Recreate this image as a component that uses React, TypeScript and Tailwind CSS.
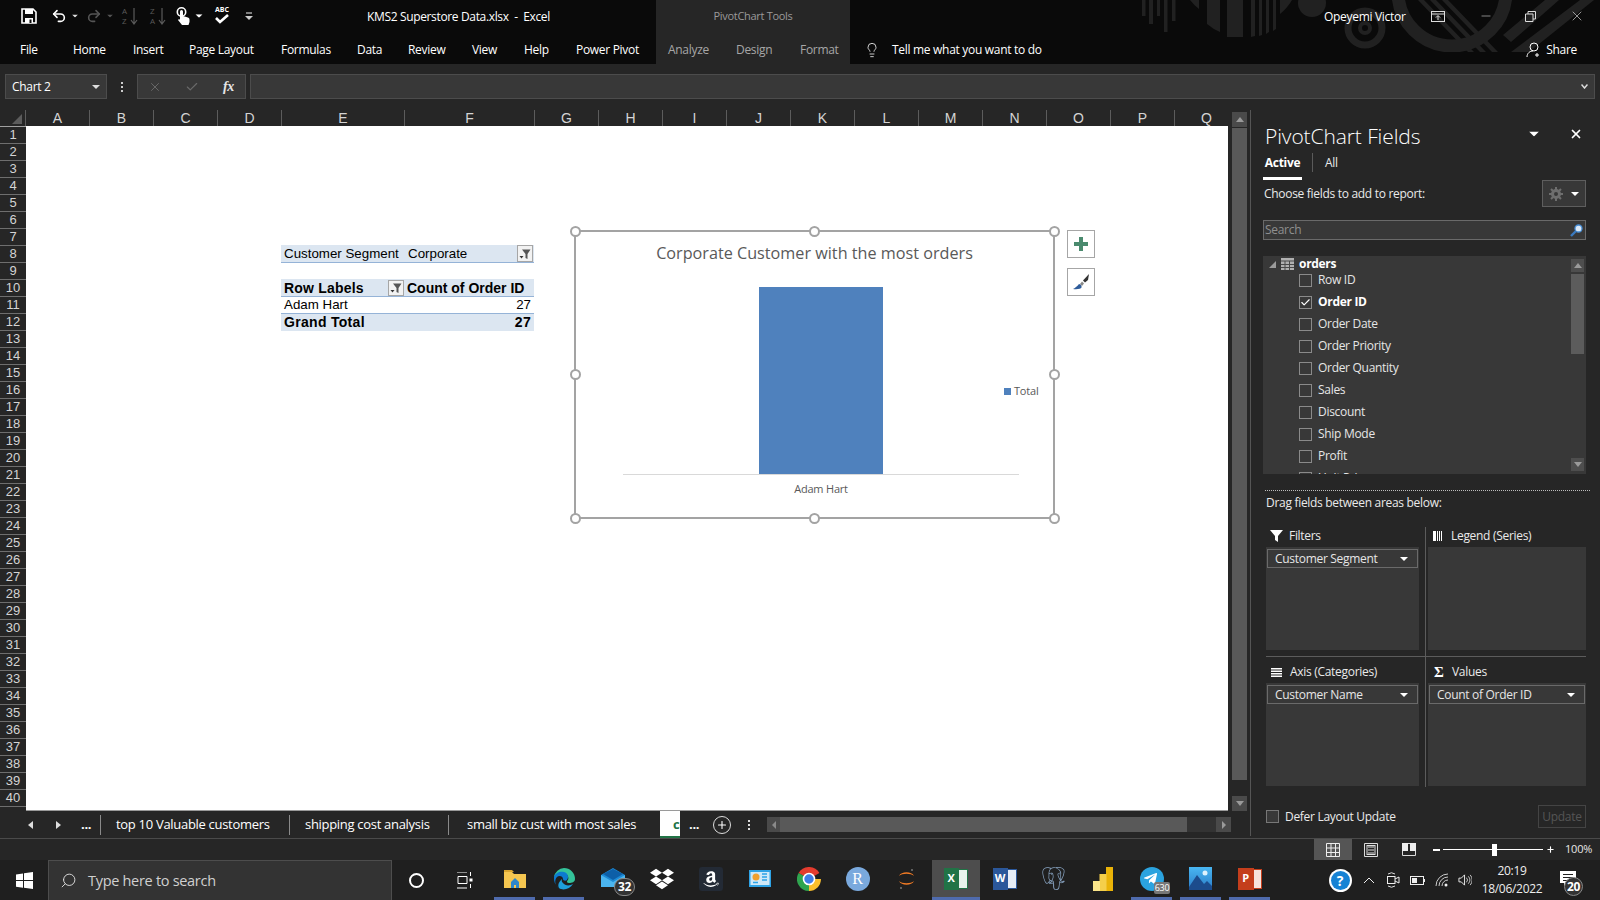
import React from "react";
import { FaDropbox, FaAmazon, FaTelegramPlane } from "react-icons/fa";
import { SiPostgresql } from "react-icons/si";
import { Search, Lightbulb, X, Minus, Plus, Undo2, Redo2, Check } from "lucide-react";

const Caret = ({ className = "" }: { className?: string }) => (
  <svg width="8" height="4" viewBox="0 0 8 4" className={className}><path d="M0 0h8L4 4z" fill="currentColor" /></svg>
);

const Box = ({ checked = false }: { checked?: boolean }) => (
  <span className="w-[13px] h-[13px] border border-[#8a8a8a] flex items-center justify-center shrink-0">
    {checked && <Check size={11} strokeWidth={2.5} className="text-white" />}
  </span>
);

const Field = ({ name, checked = false }: { name: string; checked?: boolean }) => (
  <div className="h-[22px] flex items-center pl-[36px] gap-[6px] shrink-0">
    <Box checked={checked} />
    <span className={checked ? "font-bold text-white" : "text-[#e6e6e6]"}>{name}</span>
  </div>
);

const Chip = ({ label }: { label: string }) => (
  <div className="h-[19px] mt-[2px] mx-[1px] border border-[#6a6a6a] flex items-center justify-between pl-[7px] pr-[9px] text-[#e6e6e6]">
    <span>{label}</span>
    <Caret className="text-white" />
  </div>
);

const Funnel = () => (
  <svg width="12" height="12" viewBox="0 0 12 12"><path d="M3 1.5h8.5L8.5 6v5L6.5 10V6z" fill="#555" /><path d="M0.5 8h4L2.5 10.5z" fill="#333" /></svg>
);

const Handle = ({ className }: { className: string }) => (
  <span className={"absolute w-[11px] h-[11px] rounded-full bg-white border-2 border-[#a3a3a3] " + className} />
);

const ColHead = ({ label, w }: { label: string; w: string }) => (
  <div className={w + " h-full border-r border-[#5c5c5c] flex items-center justify-center shrink-0"}>{label}</div>
);

const Cell = ({ active = false, children }: { active?: boolean; children: React.ReactNode }) => (
  <div className="w-[49px] h-full px-[4px] shrink-0">
    <div className={"relative w-full h-full flex items-center justify-center border-b-[3px] " + (active ? "border-[#4f6bad]" : "border-transparent")}>{children}</div>
  </div>
);

const Deco = () => (
  <svg className="absolute right-0 top-0" width="480" height="52" viewBox="0 0 480 52">
    <g fill="#212121">
      <rect x="22" y="0" width="3.5" height="16" /><rect x="29" y="0" width="4" height="24" /><rect x="37" y="0" width="3" height="16" /><rect x="44" y="0" width="3.5" height="32" /><rect x="52" y="0" width="3.5" height="21" />
      <path d="M70 0h9v9a50 50 0 0 1-9-9zM87 0h13v32a50 50 0 0 1-13-8zM107 0h16v37h-16zM131 0h4v36l-4 1zM139 0h3v35l-3 1zM146 0h3v32l-3 2zM153 0h3v29l-3 2zM160 0h12a50 50 0 0 1-12 14z" />
      <circle cx="192" cy="3" r="14" />
      <path d="M298 0h6l50 52h-6zM310 0h6l50 52h-6zM322 0h6l50 52h-6z" />
      <path d="M425 0h14l-48 42-8-7zM460 0h14l-75 60-8-8z" />
    </g>
    <g fill="none" stroke="#212121">
      <circle cx="245" cy="28" r="17" strokeWidth="7" />
      <circle cx="245" cy="28" r="5" strokeWidth="4" />
      <circle cx="332" cy="-8" r="54" strokeWidth="13" />
    </g>
  </svg>
);

const fields = ["Row ID", "Order ID", "Order Date", "Order Priority", "Order Quantity", "Sales", "Discount", "Ship Mode", "Profit", "Unit Price"];
const rows = Array.from({ length: 40 }, (_, i) => i + 1);

export default function App() {
  return (
    <div className="w-[1600px] h-[900px] flex flex-col overflow-hidden bg-[#262626] text-[12px] tracking-[-0.3px] text-[#e6e6e6] font-['Open_Sans','Liberation_Sans',sans-serif]">
      {/* Title bar + ribbon tabs */}
      <div className="relative h-[64px] bg-[#0a0a0a] shrink-0">
        <Deco />
        <div className="relative h-[32px] flex items-center">
          <div className="w-[21px] shrink-0" />
          <svg width="16" height="16" viewBox="0 0 16 16" className="shrink-0"><path d="M1 1h11l3 3v11H1z" fill="none" stroke="#fff" strokeWidth="1.6" /><rect x="4" y="1" width="8" height="5" fill="#fff" /><rect x="4" y="10" width="8" height="5" fill="#fff" /><rect x="8.5" y="11.5" width="2" height="3.5" fill="#0a0a0a" /></svg>
          <Undo2 size={16} strokeWidth={2.4} className="ml-[14px] text-white shrink-0" />
          <Caret className="ml-[4px] text-[#ddd] scale-75 shrink-0" />
          <Redo2 size={16} strokeWidth={2.4} className="ml-[7px] text-[#555] shrink-0" />
          <Caret className="ml-[4px] text-[#555] scale-75 shrink-0" />
          <div className="ml-[8px] w-[18px] flex items-center text-[#5a5a5a] shrink-0">
            <span className="text-[8px] leading-[10px] w-[8px]">A<br />Z</span>
            <svg width="8" height="17" viewBox="0 0 8 17"><path d="M4 0v15M1 12l3 4 3-4" fill="none" stroke="currentColor" strokeWidth="1.2" /></svg>
          </div>
          <div className="ml-[10px] w-[18px] flex items-center text-[#5a5a5a] shrink-0">
            <span className="text-[8px] leading-[10px] w-[8px]">Z<br />A</span>
            <svg width="8" height="17" viewBox="0 0 8 17"><path d="M4 0v15M1 12l3 4 3-4" fill="none" stroke="currentColor" strokeWidth="1.2" /></svg>
          </div>
          <svg width="15" height="18" viewBox="0 0 15 18" className="ml-[8px] shrink-0"><circle cx="5.5" cy="5" r="4.2" fill="none" stroke="#fff" strokeWidth="1.6" /><path d="M4 4.5a1.5 1.5 0 0 1 3 0V9l5 1.5a2 2 0 0 1 1.5 2V15l-1 3H6l-4-5 1-1 1 .8z" fill="#fff" /></svg>
          <Caret className="ml-[4px] text-white scale-90 shrink-0" />
          <div className="ml-[9px] w-[20px] h-[20px] flex flex-col items-center shrink-0">
            <span className="text-[7px] leading-[8px] font-bold text-white tracking-normal">ABC</span>
            <svg width="16" height="11" viewBox="0 0 16 11"><path d="M2 4l4 4 8-7" fill="none" stroke="#fff" strokeWidth="2.6" /></svg>
          </div>
          <svg width="8" height="9" viewBox="0 0 8 9" className="ml-[13px] shrink-0"><path d="M1 1h6" stroke="#ccc" strokeWidth="1.2" /><path d="M0 4h8L4 8z" fill="#ccc" /></svg>
          <div className="w-[114px] shrink-0" />
          <span className="w-[289px] pt-[1px] shrink-0 text-white whitespace-pre tracking-[-0.35px]">KMS2 Superstore Data.xlsx  -  Excel</span>
          <div className="w-[194px] h-full bg-[#262626] flex items-center justify-center text-[#9a9a9a] text-[11px] pt-[1px] shrink-0">PivotChart Tools</div>
          <div className="flex-1" />
          <span className="text-white w-[107px] pt-[1px] shrink-0">Opeyemi Victor</span>
          <svg width="14" height="11" viewBox="0 0 14 11" className="mr-[34px] shrink-0"><rect x="0.5" y="0.5" width="13" height="10" fill="none" stroke="#ddd" /><path d="M0 3h14M7 9V5M5 6.5L7 4.5l2 2" stroke="#ddd" fill="none" /></svg>
          <Minus size={14} strokeWidth={1} className="mr-[32px] text-[#ddd] shrink-0" />
          <svg width="11" height="11" viewBox="0 0 11 11" className="mr-[33px] shrink-0"><path d="M.5 3h7.500v7.500h-7.500zM3 3V.5h7.500V8H8" fill="none" stroke="#ddd" /></svg>
          <X size={16} strokeWidth={1} className="mr-[15px] text-[#ddd] shrink-0" />
        </div>
        <div className="relative h-[32px] flex items-center text-white">
          <span className="w-[73px] pl-[20px] pt-[3px] shrink-0">File</span>
          <span className="w-[60px] pt-[3px] shrink-0">Home</span>
          <span className="w-[56px] pt-[3px] shrink-0">Insert</span>
          <span className="w-[92px] pt-[3px] shrink-0">Page Layout</span>
          <span className="w-[76px] pt-[3px] shrink-0">Formulas</span>
          <span className="w-[51px] pt-[3px] shrink-0">Data</span>
          <span className="w-[64px] pt-[3px] shrink-0">Review</span>
          <span className="w-[52px] pt-[3px] shrink-0">View</span>
          <span className="w-[52px] pt-[3px] shrink-0">Help</span>
          <span className="w-[80px] pt-[3px] shrink-0 whitespace-nowrap">Power Pivot</span>
          <div className="w-[194px] h-full bg-[#262626] flex items-center text-[#a6a6a6] shrink-0">
            <span className="w-[80px] pl-[12px] pt-[3px] shrink-0">Analyze</span>
            <span className="w-[64px] pt-[3px] shrink-0">Design</span>
            <span className="pt-[3px]">Format</span>
          </div>
          <Lightbulb size={16} strokeWidth={1.2} className="ml-[14px] mt-[3px]" />
          <span className="ml-[12px] pt-[3px] whitespace-nowrap">Tell me what you want to do</span>
          <div className="flex-1" />
          <svg width="16" height="16" viewBox="0 0 16 16" className="shrink-0 mt-[3px]"><circle cx="8" cy="5" r="4" fill="none" stroke="#fff" strokeWidth="1" /><path d="M1 15c0-4 3-6 6-6M11 11v4M9 13h4" fill="none" stroke="#fff" strokeWidth="1" /></svg>
          <span className="ml-[4px] mr-[23px] pt-[3px]">Share</span>
        </div>
      </div>

      {/* Formula bar */}
      <div className="h-[46px] flex pt-[10px] pb-[11px] shrink-0">
        <div className="ml-[5px] w-[102px] bg-[#383838] border border-[#4c4c4c] flex items-center justify-between pl-[6px] pr-[6px] pt-[1px] text-white shrink-0">
          <span>Chart 2</span><Caret className="text-[#ddd]" />
        </div>
        <div className="w-[30px] flex flex-col items-center justify-center gap-[2px] shrink-0">
          <span className="w-[2px] h-[2px] bg-[#ccc]" /><span className="w-[2px] h-[2px] bg-[#ccc]" /><span className="w-[2px] h-[2px] bg-[#ccc]" />
        </div>
        <div className="w-[109px] bg-[#383838] border border-[#4c4c4c] flex items-center pl-[10px] shrink-0">
          <X size={14} strokeWidth={1.6} className="text-[#6a6a6a]" />
          <Check size={14} strokeWidth={2} className="ml-[23px] text-[#6a6a6a]" />
          <span className="ml-[24px] font-['Liberation_Serif',serif] italic font-bold text-[14px] text-[#e6e6e6]">fx</span>
        </div>
        <div className="ml-[4px] mr-[5px] flex-1 bg-[#383838] border border-[#4c4c4c] flex items-center justify-end pr-[6px]">
          <svg width="7" height="5" viewBox="0 0 7 5"><path d="M.5 .5L3.500 4 6.500 .5" fill="none" stroke="#ddd" strokeWidth="1.500" /></svg>
        </div>
      </div>

      {/* Main */}
      <div className="flex h-[728px] shrink-0">
        <div className="w-[1250px] flex flex-col shrink-0">
          <div className="flex h-[701px] shrink-0">
            <div className="w-[1228px] flex flex-col font-['Liberation_Sans',sans-serif] tracking-normal text-[14px] text-[#d4d4d4] shrink-0 overflow-hidden">
              {/* Column headers */}
              <div className="flex h-[16px] shrink-0 border-b border-[#a0a0a0] box-content -mb-[1px]">
                <div className="w-[26px] h-full border-r border-[#5c5c5c] flex items-end justify-end pr-[3px] pb-[2px] shrink-0">
                  <svg width="10" height="10" viewBox="0 0 10 10"><path d="M10 0v10H0z" fill="#5c5c5c" /></svg>
                </div>
                {["A", "B", "C", "D"].map((c) => <ColHead key={c} label={c} w="w-[64px]" />)}
                <ColHead label="E" w="w-[123px]" />
                <ColHead label="F" w="w-[130px]" />
                {["G", "H", "I", "J", "K", "L", "M", "N", "O", "P", "Q"].map((c) => <ColHead key={c} label={c} w="w-[64px]" />)}
              </div>
              <div className="flex flex-1 min-h-0">
                <div className="w-[26px] pt-[1px] flex flex-col shrink-0 overflow-hidden">
                  {rows.map((r) => (
                    <div key={r} className="h-[17px] shrink-0 border-b border-[#6e6e6e] flex items-center justify-center text-[13px]">{r}</div>
                  ))}
                </div>
                <div className="relative flex-1 bg-white border-b border-[#9a9a9a] pl-[255px] pt-[119px] text-black">
                  {/* Pivot table */}
                  <div className="w-[253px] text-[13.33px] text-black">
                    <div className="h-[18px] bg-[#dce6f1] border-b border-[#95b3d7] flex items-center pl-[3px] pr-[1px] whitespace-nowrap">
                      <span className="w-[124px] pt-[1px]">Customer Segment</span><span className="flex-1 pt-[1px]">Corporate</span>
                      <span className="w-[16px] h-[17px] bg-[#f2f2f2] border border-[#a6a6a6] flex items-center justify-center"><Funnel /></span>
                    </div>
                    <div className="h-[16px]" />
                    <div className="h-[18px] bg-[#dce6f1] border-b border-[#95b3d7] flex items-center pl-[3px] font-bold text-[14px] whitespace-nowrap">
                      <span className="w-[104px] pt-[1px] tracking-[0.2px]">Row Labels</span>
                      <span className="w-[16px] h-[16px] bg-[#f2f2f2] border border-[#a6a6a6] flex items-center justify-center font-normal"><Funnel /></span>
                      <span className="ml-[3px] pt-[1px]">Count of Order ID</span>
                    </div>
                    <div className="h-[16px] flex items-center justify-between pl-[3px] pr-[3px]"><span>Adam Hart</span><span>27</span></div>
                    <div className="h-[18px] bg-[#dce6f1] border-t border-[#95b3d7] flex items-center justify-between pl-[3px] pr-[3px] font-bold text-[14px] tracking-[0.3px]"><span>Grand Total</span><span>27</span></div>
                  </div>

                  {/* Chart */}
                  <div className="absolute left-[548px] top-[104px] w-[481px] h-[289px] border-2 border-[#a3a3a3] bg-white font-['Open_Sans',sans-serif] text-[#595959]">
                    <Handle className="-left-[6.500px] -top-[6.500px]" />
                    <Handle className="left-[233px] -top-[6.500px]" />
                    <Handle className="-right-[6.500px] -top-[6.500px]" />
                    <Handle className="-left-[6.500px] top-[137px]" />
                    <Handle className="-right-[6.500px] top-[137px]" />
                    <Handle className="-left-[6.500px] -bottom-[6.500px]" />
                    <Handle className="left-[233px] -bottom-[6.500px]" />
                    <Handle className="-right-[6.500px] -bottom-[6.500px]" />
                    <div className="text-center text-[16.2px] leading-[24px] pt-[9px] whitespace-nowrap">Corporate Customer with the most orders</div>
                    <div className="absolute left-[47px] top-[54px] w-[396px] h-[189px] border-b border-[#d9d9d9] flex justify-center items-end">
                      <div className="w-[124px] h-[187px] bg-[#4f81bd]" />
                    </div>
                    <div className="absolute left-[47px] top-[250px] w-[396px] text-center text-[11px] tracking-[-0.2px] leading-[14px]">Adam Hart</div>
                    <div className="absolute left-[428px] top-[152px] flex items-center gap-[3px] text-[11px] tracking-[-0.2px] leading-[14px]">
                      <span className="w-[7px] h-[7px] bg-[#4f81bd]" /><span>Total</span>
                    </div>
                  </div>

                  {/* Chart buttons */}
                  <div className="absolute left-[1041px] top-[104px] flex flex-col gap-[10px]">
                    <div className="w-[28px] h-[28px] bg-white border border-[#a6a6a6] flex items-center justify-center">
                      <svg width="14" height="14" viewBox="0 0 14 14"><path d="M5 0h4v5h5v4H9v5H5V9H0V5h5z" fill="#4a8a6e" /></svg>
                    </div>
                    <div className="w-[28px] h-[28px] bg-white border border-[#a6a6a6] flex items-center justify-center">
                      <svg width="18" height="18" viewBox="0 0 18 18"><path d="M17 1l-1 6-3 2.500-2-2z" fill="#333" /><path d="M10 8.500l2 2-2 2.500-2-2z" fill="#888" /><path d="M7 11c2 .5 3 2 2.500 3.500C9 16 5 16.500 1 16c2-1 4-2.500 6-5z" fill="#2e5c9a" /></svg>
                    </div>
                  </div>
                </div>
              </div>
            </div>
            {/* Vertical scrollbar */}
            <div className="w-[15px] ml-[4px] pt-[2px] flex flex-col shrink-0">
              <div className="h-[15px] bg-[#4a4a4a] flex items-center justify-center"><svg width="8" height="5" viewBox="0 0 8 5"><path d="M4 0l4 5H0z" fill="#9a9a9a" /></svg></div>
              <div className="flex-1 bg-[#595959] mt-[1px] mb-[16px]" />
              <div className="h-[15px] bg-[#4a4a4a] flex items-center justify-center"><svg width="8" height="5" viewBox="0 0 8 5"><path d="M0 0h8L4 5z" fill="#9a9a9a" /></svg></div>
            </div>
          </div>

          {/* Sheet tabs */}
          <div className="h-[27px] flex items-center text-white text-[13px] shrink-0">
            <svg width="5" height="8" viewBox="0 0 5 8" className="ml-[28px] shrink-0"><path d="M5 0v8L0 4z" fill="#ddd" /></svg>
            <svg width="5" height="8" viewBox="0 0 5 8" className="ml-[23px] shrink-0"><path d="M0 0v8l5-4z" fill="#ddd" /></svg>
            <span className="w-[39px] pl-[20px] font-bold leading-none shrink-0">...</span>
            <span className="w-[1px] h-[20px] bg-[#8a8a8a] shrink-0" />
            <span className="w-[188px] pl-[15px] whitespace-nowrap shrink-0">top 10 Valuable customers</span>
            <span className="w-[1px] h-[20px] bg-[#8a8a8a] shrink-0" />
            <span className="w-[158px] pl-[15px] whitespace-nowrap shrink-0">shipping cost analysis</span>
            <span className="w-[1px] h-[20px] bg-[#8a8a8a] shrink-0" />
            <span className="w-[211px] pl-[18px] whitespace-nowrap shrink-0">small biz cust with most sales</span>
            <div className="w-[20px] h-[27px] bg-white border-b-2 border-[#217346] overflow-hidden pl-[13px] text-[#217346] font-bold leading-[26px] shrink-0">co</div>
            <span className="w-[33px] pl-[9px] font-bold leading-none shrink-0">...</span>
            <span className="w-[18px] h-[18px] rounded-full border border-[#ddd] flex items-center justify-center shrink-0"><Plus size={12} strokeWidth={2.2} /></span>
            <div className="w-[36px] flex flex-col items-center gap-[2px] shrink-0">
              <span className="w-[2px] h-[2px] bg-[#ddd]" /><span className="w-[2px] h-[2px] bg-[#ddd]" /><span className="w-[2px] h-[2px] bg-[#ddd]" />
            </div>
            <div className="w-[13px] h-[15px] bg-[#4a4a4a] flex items-center justify-center shrink-0"><svg width="4" height="8" viewBox="0 0 4 8"><path d="M4 0v8L0 4z" fill="#8a8a8a" /></svg></div>
            <div className="w-[407px] h-[15px] bg-[#595959] shrink-0" />
            <div className="w-[29px] h-[15px] bg-[#333] shrink-0" />
            <div className="w-[15px] h-[15px] bg-[#4a4a4a] flex items-center justify-center shrink-0"><svg width="4" height="8" viewBox="0 0 4 8"><path d="M0 0v8l4-4z" fill="#9a9a9a" /></svg></div>
          </div>
        </div>

        {/* PivotChart Fields panel */}
        <div className="w-[350px] h-[726px] border-l border-[#555] flex flex-col shrink-0 text-[#eaeaea]">
          <div className="h-[28px] mt-[13px] flex items-center pl-[14px] shrink-0">
            <span className="text-[21px] font-light text-white whitespace-nowrap tracking-[-0.1px]">PivotChart Fields</span>
            <div className="flex-1" />
            <Caret className="text-white mr-[31px] -mt-[6px] scale-125" />
            <X size={14} strokeWidth={3} className="text-white mr-[17px] -mt-[6px]" />
          </div>
          <div className="h-[29px] flex pl-[12px] shrink-0">
            <div className="w-[39px] border-b-[3px] border-white font-bold text-white text-center leading-[24px] shrink-0">Active</div>
            <div className="w-[1px] h-[19px] mt-[2px] ml-[10px] bg-[#5a5a5a] shrink-0" />
            <span className="ml-[12px] leading-[24px]">All</span>
          </div>
          <div className="h-[27px] flex items-center justify-between pl-[13px] pr-[14px] shrink-0">
            <span>Choose fields to add to report:</span>
            <div className="w-[44px] h-[27px] border border-[#5e5e5e] bg-[#383838] flex items-center justify-center gap-[8px]">
              <svg width="14" height="14" viewBox="0 0 14 14"><circle cx="7" cy="7" r="3.500" fill="none" stroke="#6e6e6e" strokeWidth="3" /><path d="M7 0v3M7 11v3M0 7h3M11 7h3M2 2l2 2M10 10l2 2M12 2l-2 2M4 10l-2 2" stroke="#6e6e6e" strokeWidth="2" /></svg>
              <Caret className="text-white" />
            </div>
          </div>
          <div className="h-[20px] mt-[13px] ml-[12px] mr-[14px] bg-[#383838] border border-[#6a6a6a] flex items-center justify-between pl-[1px] pr-[2px] text-[#8f8f8f] shrink-0">
            <span>Search</span>
            <svg width="13" height="13" viewBox="0 0 13 13"><circle cx="8.500" cy="4.500" r="3.500" fill="#dbe9f7" stroke="#4a8fd6" strokeWidth="1.300" /><path d="M6 7L1 12" stroke="#3b7bc0" strokeWidth="2.400" /></svg>
          </div>
          <div className="h-[218px] mt-[16px] ml-[12px] mr-[14px] bg-[#383838] flex overflow-hidden shrink-0">
            <div className="flex-1 flex flex-col min-w-0">
              <div className="h-[16px] -mb-[3px] flex items-center shrink-0">
                <svg width="7" height="7" viewBox="0 0 7 7" className="ml-[6px]"><path d="M7 0v7H0z" fill="#9a9a9a" /></svg>
                <svg width="13" height="12" viewBox="0 0 13 12" className="ml-[5px]"><rect width="13" height="12" fill="#b0b0b0" /><path d="M0 3h13M0 6.500h13M0 9.500h13M4 3v9M8.500 3v9" stroke="#4a4a4a" strokeWidth="1" /></svg>
                <span className="ml-[5px] font-bold text-white">orders</span>
              </div>
              {fields.map((f) => <Field key={f} name={f} checked={f === "Order ID"} />)}
            </div>
            <div className="w-[13px] mr-[2px] pt-[3px] flex flex-col shrink-0">
              <div className="h-[13px] bg-[#4e4e4e] flex items-center justify-center"><svg width="8" height="5" viewBox="0 0 8 5"><path d="M4 0l4 5H0z" fill="#9a9a9a" /></svg></div>
              <div className="h-[80px] mt-[2px] bg-[#5c5c5c]" />
              <div className="flex-1" />
              <div className="h-[13px] mb-[3px] bg-[#4e4e4e] flex items-center justify-center"><svg width="8" height="5" viewBox="0 0 8 5"><path d="M0 0h8L4 5z" fill="#9a9a9a" /></svg></div>
            </div>
          </div>
          <div className="mt-[16px] ml-[14px] mr-[10px] border-t border-dotted border-[#bdbdbd] shrink-0" />
          <div className="h-[36px] pl-[15px] leading-[24px] shrink-0">Drag fields between areas below:</div>
          {/* Areas */}
          <div className="flex h-[129px] pl-[15px] shrink-0">
            <div className="w-[153px] flex flex-col shrink-0">
              <div className="h-[18px] flex items-center shrink-0">
                <svg width="13" height="12" viewBox="0 0 13 12" className="ml-[4px]"><path d="M0 0h13L8 6v6L5 10V6z" fill="#fff" /></svg>
                <span className="ml-[6px]">Filters</span>
              </div>
              <div className="h-[103px] mt-[2px] bg-[#383838] flex flex-col"><Chip label="Customer Segment" /></div>
            </div>
            <div className="w-[1px] ml-[6px] bg-[#5c5c5c] shrink-0" />
            <div className="w-[158px] ml-[2px] flex flex-col shrink-0">
              <div className="h-[18px] flex items-center shrink-0">
                <svg width="9" height="10" viewBox="0 0 9 10" className="ml-[5px]"><path d="M0 0h3v10H0zM4 0h1v10H4zM6 0h1v10H6zM8 0h1v10H8z" fill="#fff" /></svg>
                <span className="ml-[9px]">Legend (Series)</span>
              </div>
              <div className="h-[103px] mt-[2px] bg-[#383838]" />
            </div>
          </div>
          <div className="h-[1px] ml-[15px] mr-[14px] bg-[#5c5c5c] shrink-0" />
          <div className="flex h-[130px] pl-[15px] shrink-0">
            <div className="w-[153px] flex flex-col shrink-0">
              <div className="h-[26px] pt-[4px] flex items-center shrink-0">
                <svg width="11" height="9" viewBox="0 0 11 9" className="ml-[5px]"><path d="M0 0h11v1.500H0zM0 2.500h11V4H0zM0 5h11v1.500H0zM0 7.500h11V9H0z" fill="#fff" /></svg>
                <span className="ml-[8px]">Axis (Categories)</span>
              </div>
              <div className="h-[103px] bg-[#383838] flex flex-col"><Chip label="Customer Name" /></div>
            </div>
            <div className="w-[1px] ml-[6px] bg-[#5c5c5c] shrink-0" />
            <div className="w-[158px] ml-[2px] flex flex-col shrink-0">
              <div className="h-[26px] pt-[4px] flex items-center shrink-0">
                <span className="ml-[6px] w-[11px] font-['Liberation_Serif',serif] font-bold text-[15px] leading-none text-white">Σ</span>
                <span className="ml-[7px]">Values</span>
              </div>
              <div className="h-[103px] bg-[#383838] flex flex-col"><Chip label="Count of Order ID" /></div>
            </div>
          </div>
          <div className="h-[23px] mt-[18px] pl-[15px] pr-[14px] flex items-center shrink-0">
            <span className="w-[13px] h-[13px] border border-[#777] bg-[#383838]" />
            <span className="ml-[6px]">Defer Layout Update</span>
            <div className="flex-1" />
            <span className="w-[48px] h-[23px] border border-[#444] text-[#555] flex items-center justify-center">Update</span>
          </div>
        </div>
      </div>

      {/* Status bar */}
      <div className="h-[22px] border-t border-[#4a4a4a] flex items-stretch justify-end shrink-0">
        <div className="w-[38px] bg-[#555] flex items-center justify-center shrink-0">
          <svg width="14" height="14" viewBox="0 0 14 14"><path d="M.5 .5h13v13H.5zM.5 5h13M.5 9.500h13M5 .5v13M9.500 .5v13" fill="none" stroke="#eee" /></svg>
        </div>
        <div className="w-[38px] flex items-center justify-center shrink-0">
          <svg width="14" height="14" viewBox="0 0 14 14"><path d="M.5 .5h13v13H.5zM4 4h6M4 7h6M4 10h6" fill="none" stroke="#ddd" /><rect x="3" y="2.500" width="8" height="9" fill="none" stroke="#ddd" /></svg>
        </div>
        <div className="w-[38px] flex items-center justify-center shrink-0">
          <svg width="14" height="13" viewBox="0 0 14 13"><path d="M.5 .5h13v12H.5z" fill="none" stroke="#ddd" /><path d="M0 0h14v8H8V0H6v8H0z" fill="#eee" /></svg>
        </div>
        <div className="w-[128px] flex items-center relative shrink-0 pl-[5px]">
          <span className="w-[7px] h-[2px] bg-white shrink-0" />
          <span className="w-[100px] h-[1px] ml-[3px] bg-white shrink-0" />
          <span className="absolute left-[64px] w-[5px] h-[12px] bg-white" />
          <Plus size={9} strokeWidth={3} className="ml-[3px] text-white shrink-0" />
        </div>
        <div className="w-[44px] flex items-center pl-[9px] text-[11px] tracking-[-0.2px] shrink-0">100%</div>
      </div>

      {/* Taskbar */}
      <div className="h-[40px] bg-[#1f1f1f] flex items-stretch shrink-0">
        <div className="w-[48px] flex items-center justify-center shrink-0">
          <svg width="17" height="17" viewBox="0 0 17 17"><path d="M0 2.400l7-1v6.700H0zM8 1.200L17 0v8.100H8zM0 9h7v6.700l-7-1zM8 9h9v8l-9-1.200z" fill="#fff" /></svg>
        </div>
        <div className="w-[344px] bg-[#333] border border-[#4d4d4d] border-b-0 flex items-center pl-[11px] text-[14.500px] text-[#d0d0d0] shrink-0">
          <Search size={17} strokeWidth={1.3} className="-scale-x-100 text-[#e0e0e0]" />
          <span className="ml-[11px]">Type here to search</span>
        </div>
        <div className="w-[48px] flex items-center justify-center shrink-0">
          <span className="w-[15px] h-[15px] rounded-full border-2 border-white" />
        </div>
        <div className="w-[48px] flex items-center justify-center shrink-0">
          <svg width="17" height="17" viewBox="0 0 17 17"><path d="M1 0h10M1 16h10M2 4.500h9v7H2z M14.500 0v4M14.500 12v4" fill="none" stroke="#fff" strokeWidth="1" /><rect x="13.500" y="6.500" width="3" height="3" fill="#fff" /></svg>
        </div>
        <div className="w-[2px] shrink-0" />
        <Cell active>
          <svg width="22" height="18" viewBox="0 0 22 18"><path d="M0 2h8l2 2h12v14H0z" fill="#f5c650" /><path d="M0 0h8l2 2H0z" fill="#d9a530" /><path d="M7 12l4-4 4 4v6h-3v-3h-2v3H7z" fill="#2f86c9" /></svg>
        </Cell>
        <Cell active>
          <svg width="24" height="24" viewBox="0 0 24 24">
            <path d="M12 1a11 11 0 0 1 11 11c0 3-3 4-6 4-2 0-2-1-2-2 2-1 2-5-1-7-4-2-10 0-12 3A11 11 0 0 1 12 1z" fill="#34c39a" />
            <path d="M2 10c1-4 6-6 10-5s5 5 3 8c-1 1-4 1-4-1 0-3-4-4-6-2-3 3-2 9 2 11A12 12 0 0 1 2 10z" fill="#0c7bd0" />
            <path d="M7 21c4 3 11 1 14-4-3 2-8 2-10-1-2-2-1-3-1-4-2 2-5 5-3 9z" fill="#1e9fdb" />
          </svg>
        </Cell>
        <Cell>
          <svg width="24" height="22" viewBox="0 0 24 22"><path d="M0 7L12 0l12 7v12H0z" fill="#1c8ad6" /><path d="M0 7l12 7 12-7v12H0z" fill="#4bb5f0" /><path d="M2 6l10-5 10 5-10 6z" fill="#0d5fa8" /></svg>
          <span className="absolute left-[22px] top-[18px] w-[21px] h-[18px] rounded-full bg-[#333] border border-[#888] text-[12px] leading-[16px] text-center text-white font-bold">32</span>
        </Cell>
        <Cell><FaDropbox size={24} className="text-white" /></Cell>
        <Cell>
          <div className="w-[24px] h-[24px] bg-[#232a35] rounded-[3px] flex items-center justify-center"><FaAmazon size={18} className="text-white" /></div>
        </Cell>
        <Cell>
          <svg width="22" height="17" viewBox="0 0 22 17"><rect width="22" height="17" fill="#2ea3e6" /><rect x="1.500" y="2" width="19" height="13" fill="#cfe9f8" /><circle cx="7" cy="7" r="3.500" fill="#f0a030" /><path d="M13 4h5M13 7h5M13 10h5M4 12.500h5" stroke="#2ea3e6" strokeWidth="1.500" /></svg>
        </Cell>
        <Cell>
          <svg width="24" height="24" viewBox="0 0 24 24">
            <path d="M12 12L22.400 6A12 12 0 0 0 1.600 6z" fill="#e33b2e" />
            <path d="M12 12H24A12 12 0 0 1 12 24z" fill="#fbc02d" />
            <path d="M12 12V24A12 12 0 0 1 1.600 6z" fill="#2fa44f" />
            <circle cx="12" cy="12" r="5.500" fill="#3f7ee8" stroke="#fff" strokeWidth="1.600" />
          </svg>
        </Cell>
        <Cell>
          <div className="w-[24px] h-[24px] rounded-full bg-[#7aa9dd] flex items-center justify-center text-white font-['Liberation_Serif',serif] text-[16px]">R</div>
        </Cell>
        <Cell>
          <svg width="17" height="23" viewBox="0 0 17 23"><path d="M1 9c2-5 13-5 15 0-3-3-12-3-15 0zM1 14c2 5 13 5 15 0-3 3-12 3-15 0z" fill="#f07a24" /><circle cx="14" cy="3" r="1" fill="#777" /><circle cx="3" cy="21" r="1" fill="#777" /></svg>
        </Cell>
        <div className="w-[49px] shrink-0 h-full px-[0.500px]">
          <div className="w-full h-full bg-[#4d4d4d] border-b-[3px] border-[#4f6bad] flex items-center justify-center">
            <div className="relative w-[24px] h-[22px]">
              <div className="absolute right-0 top-[1px] w-[16px] h-[20px] bg-[#e8f3ec] border border-[#217346]" />
              <div className="absolute left-0 top-0 w-[15px] h-[22px] bg-[#217346] text-white text-[11px] font-bold flex items-center justify-center">X</div>
            </div>
          </div>
        </div>
        <Cell>
          <div className="relative w-[24px] h-[22px]">
            <div className="absolute right-0 top-[1px] w-[16px] h-[20px] bg-[#e6edf7] border border-[#2b579a]" />
            <div className="absolute left-0 top-0 w-[15px] h-[22px] bg-[#2b579a] text-white text-[11px] font-bold flex items-center justify-center">W</div>
          </div>
        </Cell>
        <Cell><SiPostgresql size={23} className="text-[#8aa6c4]" /></Cell>
        <Cell>
          <svg width="20" height="24" viewBox="0 0 20 24"><rect x="13" y="0" width="7" height="24" fill="#eab308" /><rect x="6.500" y="7" width="7" height="17" fill="#f5cf4a" /><rect x="0" y="14" width="7" height="10" fill="#fbe58a" /></svg>
        </Cell>
        <Cell active>
          <div className="w-[24px] h-[24px] rounded-full bg-[#2ba3df] flex items-center justify-center"><FaTelegramPlane size={15} className="text-white -ml-[2px]" /></div>
          <span className="absolute left-[23px] top-[22px] w-[16px] h-[12px] rounded-[2px] bg-[#777] text-[9px] leading-[12px] text-center text-white">630</span>
        </Cell>
        <Cell active>
          <svg width="23" height="23" viewBox="0 0 23 23"><defs><linearGradient id="ph" x1="0" y1="0" x2="0" y2="1"><stop offset="0" stopColor="#49b6f2" /><stop offset="1" stopColor="#2a7cc7" /></linearGradient></defs><rect width="23" height="23" fill="url(#ph)" /><circle cx="16" cy="6" r="2.500" fill="#dff2fd" /><path d="M0 20L8 8l7 9 3-3 5 5v4H0z" fill="#1c4b8c" /></svg>
        </Cell>
        <Cell active>
          <div className="relative w-[24px] h-[22px]">
            <div className="absolute right-0 top-[1px] w-[16px] h-[20px] bg-[#f7e3dc] border border-[#c43e1c]" />
            <div className="absolute left-0 top-0 w-[16px] h-[22px] bg-[#c43e1c] text-white text-[11px] font-bold flex items-center justify-center">P</div>
          </div>
        </Cell>
        <div className="w-[46px] shrink-0" />
        {/* Tray */}
        <div className="w-[40px] flex items-center justify-center shrink-0">
          <span className="w-[23px] h-[23px] rounded-full bg-white flex items-center justify-center">
            <span className="w-[19px] h-[19px] rounded-full bg-[#1682d4] text-white font-bold text-[14px] leading-[19px] text-center">?</span>
          </span>
        </div>
        <div className="w-[18px] flex items-center justify-center shrink-0">
          <svg width="12" height="7" viewBox="0 0 12 7"><path d="M1 6l5-5 5 5" fill="none" stroke="#eee" strokeWidth="1" /></svg>
        </div>
        <div className="w-[30px] flex items-center justify-center shrink-0">
          <svg width="14" height="18" viewBox="0 0 14 18"><path d="M2 3a6 6 0 0 1 7 0M2 15a6 6 0 0 0 7 0" fill="none" stroke="#ddd" /><rect x="1.500" y="5.500" width="7.500" height="7" fill="none" stroke="#eee" /><path d="M9 8l4-2v6l-4-2" fill="none" stroke="#eee" /></svg>
        </div>
        <div className="w-[18px] flex items-center justify-center shrink-0">
          <svg width="15" height="9" viewBox="0 0 15 9"><rect x=".5" y=".5" width="13" height="8" fill="none" stroke="#eee" /><rect x="2" y="2" width="5" height="5" fill="#eee" /><rect x="14" y="3" width="1" height="3" fill="#eee" /></svg>
        </div>
        <div className="w-[32px] flex items-center justify-center shrink-0">
          <svg width="15" height="14" viewBox="0 0 15 14"><path d="M1 13A12 12 0 0 1 13 1M4 13a9 9 0 0 1 9-9M7 13a6 6 0 0 1 6-6" fill="none" stroke="#ccc" /><circle cx="11" cy="12" r="1.500" fill="#eee" /></svg>
        </div>
        <div className="w-[14px] flex items-center justify-center shrink-0">
          <svg width="15" height="14" viewBox="0 0 15 14"><path d="M1 5h2.500L7 1.500v11L3.500 9H1z" fill="none" stroke="#eee" /><path d="M9 4.500a3.500 3.500 0 0 1 0 5M11 3a6 6 0 0 1 0 8M13 1.500a8 8 0 0 1 0 11" fill="none" stroke="#ccc" /></svg>
        </div>
        <div className="w-[80px] flex flex-col items-center justify-center text-[12px] leading-[18px] text-[#eee] shrink-0">
          <span>20:19</span><span>18/06/2022</span>
        </div>
        <div className="w-[32px] relative flex items-center justify-center shrink-0">
          <svg width="16" height="15" viewBox="0 0 16 15" className="-mt-[4px]"><path d="M0 0h16v12h-9l-3 3v-3H0z" fill="#fff" /><path d="M3 3.500h10M3 6.500h10M3 9.500h7" stroke="#1f1f1f" /></svg>
          <span className="absolute left-[12px] top-[17px] w-[19px] h-[19px] rounded-full bg-[#333] border border-[#888] text-[12px] leading-[17px] text-center text-white font-bold">20</span>
        </div>
      </div>
    </div>
  );
}
